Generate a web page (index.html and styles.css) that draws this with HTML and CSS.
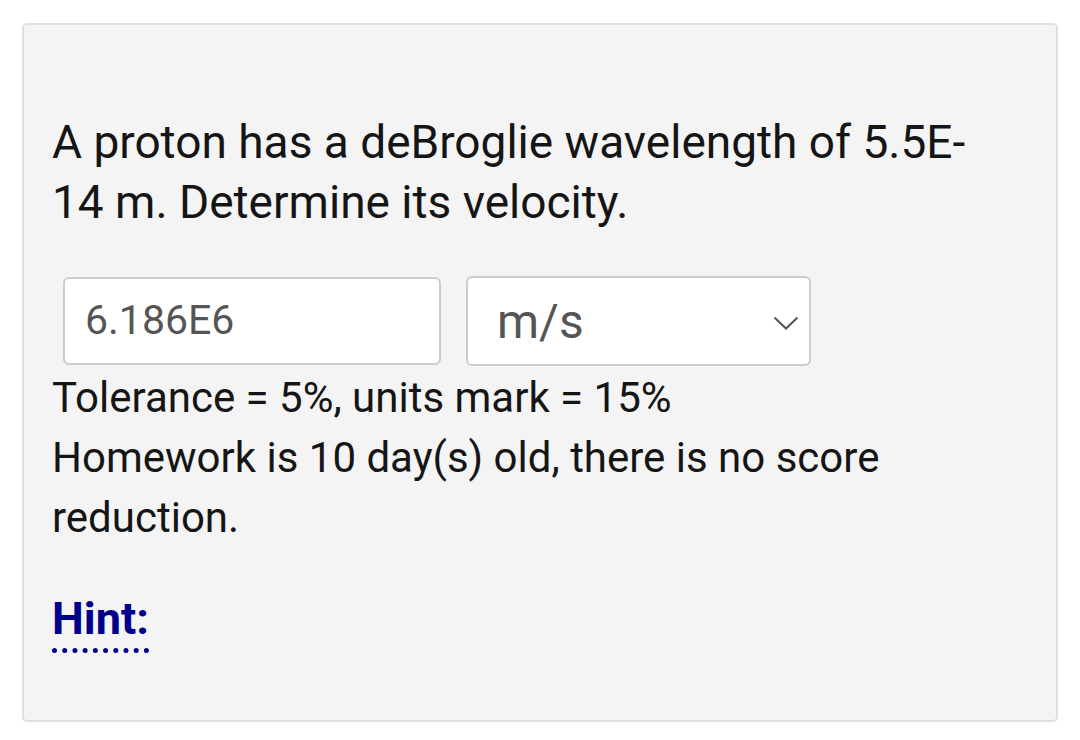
FILE: index.html
```html
<!DOCTYPE html>
<html>
<head>
<meta charset="utf-8">
<link rel="stylesheet" href="styles.css">
</head>
<body>
<div class="card">
  <p class="question">A proton has a deBroglie wavelength of 5.5E-<br>14 m. Determine its velocity.</p>
  <div class="answer-row">
    <div class="input">6.186E6</div>
    <div class="select">
      <span>m/s</span>
      <svg class="chev" width="26" height="14" viewBox="0 0 26 14"><path d="M1.5 1.5 L13 12.5 L24.5 1.5" fill="none" stroke="#555" stroke-width="2"/></svg>
    </div>
  </div>
  <p class="info">Tolerance = 5%, units mark = 15%<br>Homework is 10 day(s) old, there is no score reduction.</p>
  <div class="hint">Hint:</div>
</div>
</body>
</html>
```
FILE: styles.css
```css
html, body { margin: 0; padding: 0; background: #fff; }
body { font-family: Roboto, "Noto Sans", sans-serif; color: #151515; }
.card {
  margin: 23px 22px 0 22px;
  height: 699px;
  box-sizing: border-box;
  background: #f4f4f4;
  border: 2px solid #e0e0e0;
  border-radius: 5px;
  padding: 87px 28px 0 28px;
}
.question {
  margin: 0;
  font-size: 46px;
  line-height: 60px;
}
.answer-row {
  display: flex;
  align-items: center;
  gap: 25px;
  margin: 44px 0 0 11px;
}
.input {
  width: 378px;
  height: 88px;
  box-sizing: border-box;
  background: #fff;
  border: 2px solid #cccccc;
  border-radius: 6px;
  font-size: 41px;
  color: #555;
  padding: 0 0 2px 20px;
  display: flex;
  align-items: center;
}
.select {
  width: 345px;
  height: 90px;
  box-sizing: border-box;
  background: #fff;
  border: 2px solid #cccccc;
  border-radius: 6px;
  font-size: 48px;
  color: #555;
  padding: 0 10px 0 29px;
  display: flex;
  align-items: center;
  justify-content: space-between;
}
.chev { margin-top: 4px; }
.info {
  margin: 2px 0 0 0;
  font-size: 42px;
  line-height: 60px;
}
.hint {
  margin-top: 46px;
  display: inline-block;
  font-size: 45px;
  font-weight: bold;
  color: #00008b;
  border-bottom: 5px dotted #00008b;
  line-height: 50px;
  padding-bottom: 4px;
}
```
